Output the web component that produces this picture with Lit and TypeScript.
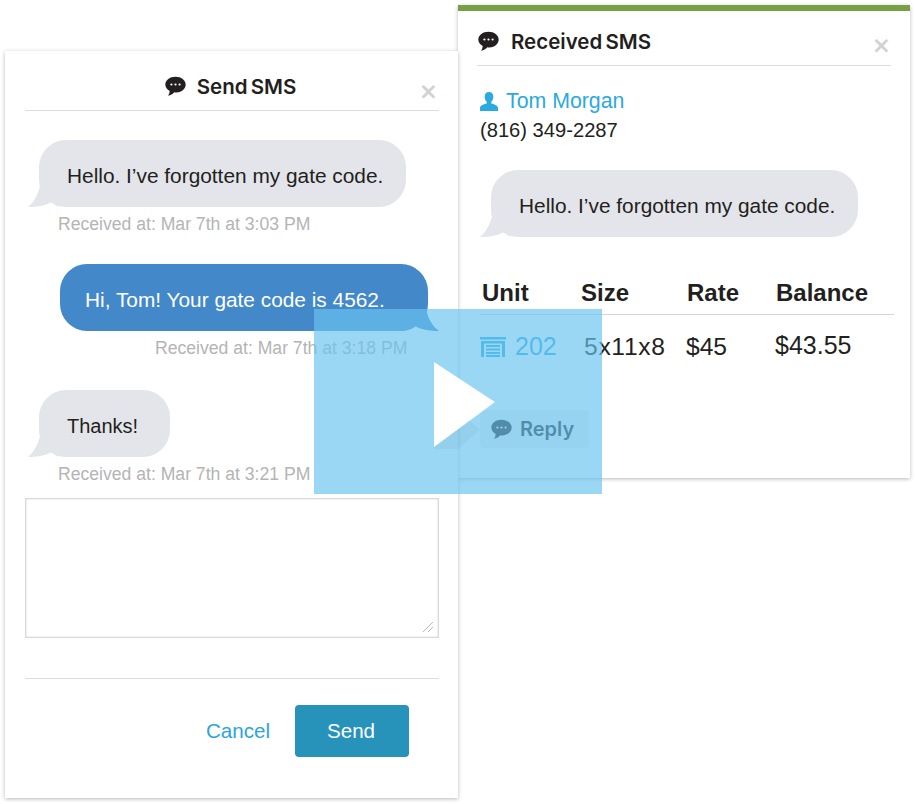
import { LitElement, html, css, svg } from "lit";
import { customElement } from "lit/decorators.js";

const chat = (cls: string) => html`<svg class=${cls} viewBox="0 0 20 20" aria-hidden="true">
  <path fill="currentColor" d="M10 .6C4.6.6.3 3.900.3 8.100c0 2.600 1.700 4.900 4.200 6.200-.1 1.500-.6 3.100-1.500 4.600 2.300-.6 4.400-1.900 5.900-3.500.7.1 1.400.2 2.100.2 5.100-.1 8.700-3.400 8.700-7.500C19.700 3.900 15.400.6 10 .6z"/>
  <circle cx="6.100" cy="8.100" r="1.050" fill="#fff"/><circle cx="10" cy="8.100" r="1.050" fill="#fff"/><circle cx="13.900" cy="8.100" r="1.050" fill="#fff"/>
</svg>`;

const tailIn = svg`<path d="M14 0C14 18 9 32 0 39C8 39 17 38 24 34L30 39V0Z"/>`;
const tailOut = svg`<path d="M26 0C25 18 30 32 40 39C32 39 22 38 16 34C12 37 6 39 0 39V0Z"/>`;

@customElement("app-root")
export class AppRoot extends LitElement {
  static styles = css`
    :host { display: block; width: 915px; height: 804px; position: relative; overflow: hidden; background: #fff;
      font-family: "Liberation Sans", Arial, sans-serif; color: #231f20; }
    .stage { display: flex; align-items: flex-start; padding: 5px 0 0 5px; }
    .card { position: relative; box-sizing: border-box; width: 453px; background: #fff; box-shadow: 0 1px 4px rgba(0,0,0,.28); }
    .send { margin-top: 46px; height: 747px; padding: 0 19px 0 20px; z-index: 1; }
    .recv { height: 473px; border-top: 6px solid #76a043; padding: 0 19px; width: 452px; }
    .head { display: flex; align-items: center; box-sizing: border-box; border-bottom: 1px solid #ddd; font-family: Inter, "Liberation Sans", sans-serif; font-weight: 600; font-size: 20.500px; word-spacing: -2px; }
    .send .head { height: 60px; justify-content: center; gap: 11px; padding: 22px 3px 10px 0; }
    .recv .head { height: 55px; gap: 12px; padding: 8px 0 1px 1px; width: 414px; }
    .ico { width: 21px; height: 21px; flex: none; color: #231f20; }
    .x { position: absolute; color: #d2d2d2; font-size: 23px; font-weight: 700; line-height: 1; font-family: "DejaVu Sans", sans-serif; }
    .send .x { right: 20px; top: 29px; }
    .recv .x { right: 19px; top: 23px; }

    .thread { display: flex; flex-direction: column; padding-top: 29px; }
    .bubble { position: relative; box-sizing: border-box; height: 67px; border-radius: 27px; display: flex; align-items: center; font-size: 20.850px; white-space: nowrap; background: #e4e5ea; padding: 5px 23px 0 28px; align-self: flex-start; }
    .bubble .tail { position: absolute; bottom: 0; width: 30px; height: 39px; fill: #e4e5ea; left: -11px; }
    .label { position: relative; }
    .left { margin-left: 14px; }
    .out { background: #4388c8; color: #fff; margin-left: 35px; padding: 5px 43px 0 25px; }
    .out .tail { fill: #4388c8; left: auto; right: -11px; width: 40px; }
    .meta { font-size: 17.600px; color: #b4b4b4; margin: 7px 0 0 33px; line-height: 20px; height: 20px; }
    .meta.r { margin-left: 130px; }
    .gap { height: 30px; }
    .gap2 { height: 32px; }
    .thanks { padding: 5px 32px 0 28px; font-size: 20px; }

    .ta { box-sizing: border-box; height: 140px; width: 414px; border: 1px solid #d9d9d9; box-shadow: inset 0 0 0 .5px #e6e6e6; margin-top: 14px; position: relative; }
    .grip { position: absolute; right: 4px; bottom: 4px; width: 12px; height: 12px; stroke: #b9b9b9; stroke-width: 1; fill: none; }
    .rule { border-top: 1px solid #ddd; margin-top: 40px; width: 414px; }
    .actions { display: flex; justify-content: flex-end; align-items: center; gap: 25px; margin-top: 26px; padding-right: 30px; width: 414px; box-sizing: border-box; }
    .cancel { font-size: 20.600px; color: #2aa5de; }
    .btn { box-sizing: border-box; width: 114px; height: 52px; background: #2893ba; color: #fff; font-size: 20.600px; border-radius: 4px; padding-right: 2px; display: flex; align-items: center; justify-content: center; }

    .contact { padding: 22px 0 0 3px; }
    .name { display: flex; align-items: center; gap: 8px; font-size: 21.300px; color: #2aaae1; line-height: 27px; }
    .person { flex: none; }
    .phone { font-size: 20.150px; line-height: 26px; margin-top: 2px; }
    .thread2 { padding-top: 27px; display: flex; }

    table { border-collapse: collapse; table-layout: fixed; width: 414px; margin: 34px 0 0 3px; }
    th { font-size: 24px; font-weight: 700; text-align: left; height: 43px; padding: 0 0 0 2px; border-bottom: 1px solid #d5d5d5; }
    th.a { width: 97px; } th.b { width: 104px; } th.c { width: 87px; }
    td { font-size: 24.600px; height: 60px; padding: 0; vertical-align: middle; white-space: nowrap; }
    .unit { display: flex; align-items: center; gap: 9px; color: #2aaae1; font-size: 25px; }
    .size { padding-left: 5px; letter-spacing: .7px; }
    .c3 { padding-left: 1px; }
    .bal { padding: 0 0 3px 1px; font-size: 25px; }

    .reply { margin: 32px 0 0 3px; width: 109px; height: 38px; box-sizing: border-box; border-radius: 4px; background: #f0f1f3; display: flex; align-items: center; gap: 8px; padding-left: 11px; font-family: Inter, "Liberation Sans", sans-serif; font-weight: 600; font-size: 20px; }

    .overlay { position: absolute; left: 314px; top: 309px; width: 288px; height: 185px; background: rgba(104,195,240,.67); z-index: 2; }
    .overlay svg { display: block; width: 100%; height: 100%; }
  `;

  private msg(text: string, cls: string, time: string, right = false) {
    return html`<div class="bubble ${cls}">
        <svg class="tail" viewBox=${right ? "0 0 40 39" : "0 0 30 39"} aria-hidden="true">${right ? tailOut : tailIn}</svg>
        <span class="label">${text}</span>
      </div>
      <div class="meta ${right ? "r" : ""}">${time}</div>`;
  }

  render() {
    return html`
      <div class="stage">
        <section class="card send">
          <div class="head">${chat("ico")}<span>Send SMS</span></div>
          <div class="x">×</div>
          <div class="thread">
            ${this.msg("Hello. I’ve forgotten my gate code.", "left", "Received at: Mar 7th at 3:03 PM")}
            <div class="gap"></div>
            ${this.msg("Hi, Tom! Your gate code is 4562.", "out", "Received at: Mar 7th at 3:18 PM", true)}
            <div class="gap2"></div>
            ${this.msg("Thanks!", "left thanks", "Received at: Mar 7th at 3:21 PM")}
          </div>
          <div class="ta">
            <svg class="grip" viewBox="0 0 12 12" aria-hidden="true"><path d="M1 11 11 1M6 11l5-5"/></svg>
          </div>
          <div class="rule"></div>
          <div class="actions"><span class="cancel">Cancel</span><span class="btn">Send</span></div>
        </section>
        <section class="card recv">
          <div class="head">${chat("ico")}<span>Received SMS</span></div>
          <div class="x">×</div>
          <div class="contact">
            <div class="name">
              <svg class="person" width="18" height="19" viewBox="0 0 18 19" aria-hidden="true"><path fill="currentColor" d="M9 0c2.800 0 4.300 2 4.300 4.800 0 2-.8 4-2 5v1.700c2.300.8 6.700 1.500 6.700 4.500v3H0v-3c0-3 4.400-3.700 6.700-4.500V9.800c-1.200-1-2-3-2-5C4.700 2 6.200 0 9 0z"/></svg>
              <span>Tom Morgan</span>
            </div>
            <div class="phone">(816) 349-2287</div>
          </div>
          <div class="thread2">
            <div class="bubble left"><svg class="tail" viewBox="0 0 30 39" aria-hidden="true">${tailIn}</svg><span class="label">Hello. I’ve forgotten my gate code.</span></div>
          </div>
          <table>
            <tr><th class="a">Unit</th><th class="b">Size</th><th class="c">Rate</th><th>Balance</th></tr>
            <tr>
              <td><div class="unit">
                <svg width="26" height="20" viewBox="0 0 26 20" aria-hidden="true"><path fill="currentColor" d="M0 0h26v2.500H0zM1 4h24v16h-3V6.500H4V20H1zM6 8h14v2H6zM6 11.500h14v2H6zM6 15h14v2H6zM6 18h14v2H6z"/></svg>
                <span>202</span></div></td>
              <td class="size">5x11x8</td>
              <td class="c3">$45</td>
              <td class="bal">$43.55</td>
            </tr>
          </table>
          <div class="reply">${chat("ico")}<span>Reply</span></div>
        </section>
      </div>
      <div class="overlay">
        <svg viewBox="0 0 288 185" aria-hidden="true">
          <path d="M156 112 166 121 144 140H120V100Z" fill="rgba(0,0,0,.035)"/>
          <path d="M120 53 181 93 120 138Z" fill="#fff"/>
        </svg>
      </div>
    `;
  }
}
